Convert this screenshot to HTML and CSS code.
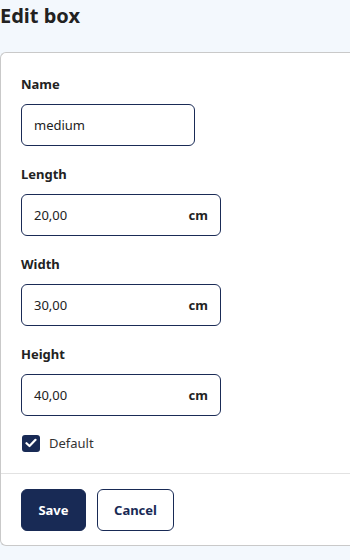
FILE: index.html
```html
<!DOCTYPE html>
<html>
<head>
<meta charset="utf-8">
<link rel="stylesheet" href="styles.css">
</head>
<body>
<h1 class="title">Edit box</h1>
<div class="card">
  <div class="card-body">
    <div class="field">
      <label class="label">Name</label>
      <div class="input input-short"><span class="value">medium</span></div>
    </div>
    <div class="field">
      <label class="label">Length</label>
      <div class="input"><span class="value">20,00</span><span class="unit">cm</span></div>
    </div>
    <div class="field">
      <label class="label">Width</label>
      <div class="input"><span class="value">30,00</span><span class="unit">cm</span></div>
    </div>
    <div class="field">
      <label class="label">Height</label>
      <div class="input"><span class="value">40,00</span><span class="unit">cm</span></div>
    </div>
    <div class="check-row">
      <span class="checkbox">
        <svg width="12" height="10" viewBox="0 0 12 10"><path d="M1.5 5.2 L4.5 8 L10.5 1.8" fill="none" stroke="#fff" stroke-width="2.2" stroke-linecap="round" stroke-linejoin="round"/></svg>
      </span>
      <span class="check-label">Default</span>
    </div>
  </div>
  <div class="card-footer">
    <button class="btn btn-primary">Save</button>
    <button class="btn btn-secondary">Cancel</button>
  </div>
</div>
</body>
</html>
```
FILE: styles.css
```css
html, body {
  margin: 0;
  padding: 0;
}
body {
  background: #f3f8fd;
  font-family: "Noto Sans", "Liberation Sans", sans-serif;
  color: #222;
  overflow: hidden;
  width: 350px;
  height: 560px;
}
.title {
  margin: 0;
  padding: 2px 0 0 0;
  font-size: 20px;
  line-height: 28px;
  font-weight: 700;
  color: #222;
  height: 50px;
  box-sizing: border-box;
}
.card {
  margin-top: 2px;
  margin-left: 0;
  background: #fff;
  border: 1px solid #c9c9c9;
  border-right: none;
  border-radius: 6px 0 0 6px;
}
.card-body {
  padding: 21px 20px 21px 20px;
  display: flex;
  flex-direction: column;
}
.field {
  display: flex;
  flex-direction: column;
  margin-bottom: 18px;
}
.label {
  font-size: 13px;
  font-weight: 700;
  line-height: 20px;
  margin-bottom: 10px;
  color: #222;
}
.input {
  box-sizing: border-box;
  width: 200px;
  height: 42px;
  border: 1px solid #1a2b56;
  border-radius: 6px;
  display: flex;
  align-items: center;
  justify-content: space-between;
  padding: 0 12px 0 12px;
  font-size: 13px;
}
.input-short {
  width: 174px;
}
.value {
  color: #222;
}
.unit {
  font-weight: 700;
  color: #222;
}
.check-row {
  display: flex;
  align-items: center;
  height: 18px;
  gap: 9px;
}
.checkbox {
  width: 18px;
  height: 17px;
  margin-left: 1px;
  background: #182a55;
  border-radius: 3px;
  display: flex;
  align-items: center;
  justify-content: center;
}
.check-label {
  font-size: 13px;
  color: #333;
}
.card-footer {
  border-top: 1px solid #e2e2e2;
  padding: 15px 20px 14px 20px;
  display: flex;
  gap: 11px;
}
.btn {
  height: 42px;
  border-radius: 6px;
  font-family: inherit;
  font-size: 13px;
  font-weight: 700;
  padding: 0;
  cursor: pointer;
}
.btn-primary {
  width: 65px;
  background: #182a55;
  border: 1px solid #182a55;
  color: #fff;
}
.btn-secondary {
  width: 77px;
  background: #fff;
  border: 1px solid #182a55;
  color: #182a55;
}
```
